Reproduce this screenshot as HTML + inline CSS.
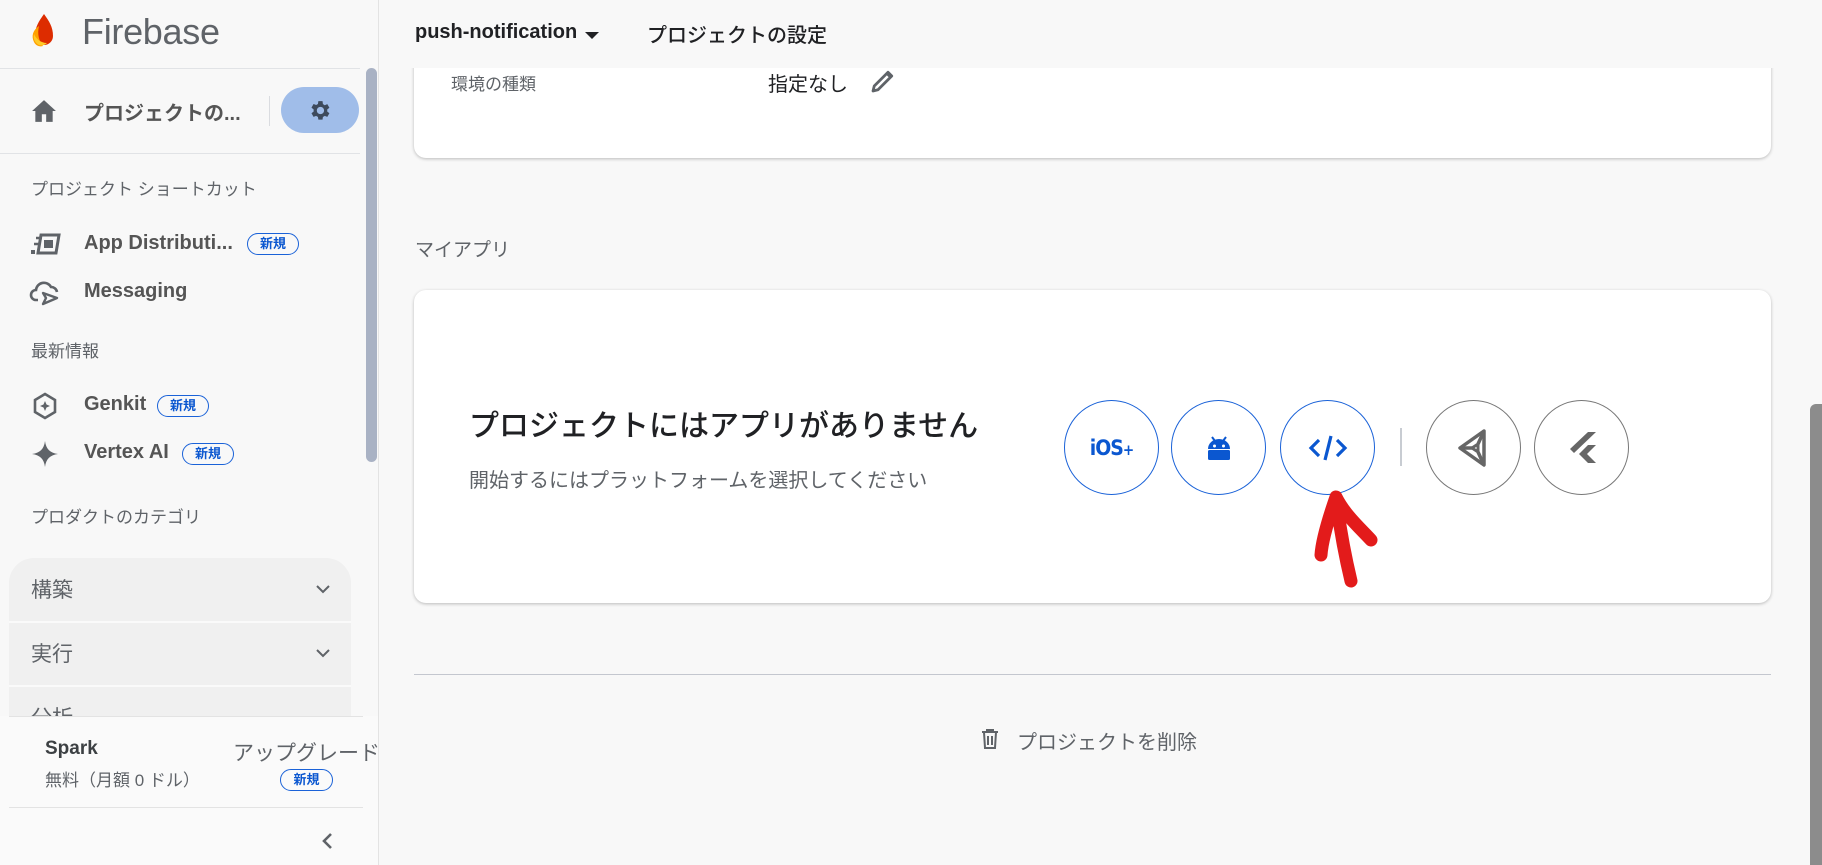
<!DOCTYPE html>
<html><head><meta charset="utf-8">
<style>
*{box-sizing:border-box;margin:0;padding:0}
body{width:1822px;height:865px;overflow:hidden;background:#f8f8f8;font-family:"Liberation Sans","Noto Sans CJK JP",sans-serif;position:relative;color:#202124}
.a{position:absolute;white-space:nowrap}
.side{position:absolute;left:0;top:0;width:379px;height:865px;background:#f8f8f8;border-right:1px solid #e3e3e3}
.lbl{font-size:17px;color:#5f6368}
.it{font-size:20px;color:#555;font-weight:700}
.badge{position:absolute;height:22px;border:1.5px solid #1a62d8;border-radius:11px;color:#0b57d0;font-size:13px;font-weight:700;text-align:center;line-height:19px}
.card{position:absolute;left:414px;width:1357px;background:#fff;border-radius:12px;box-shadow:0 1px 3px rgba(0,0,0,.25)}
.circ{position:absolute;width:95px;height:95px;border-radius:50%;border:1.3px solid #1a62d8;top:400px;display:flex;align-items:center;justify-content:center}
.circ.g{border-color:#777}
.chev{position:absolute;left:316px;width:14px;height:14px}
</style></head><body>

<div class="card" style="top:-20px;height:178px"></div>
<div style="position:absolute;left:379px;top:0;width:1430px;height:68px;background:#f8f8f8"></div>
<div class="a" style="left:415px;top:21px;font-size:20px;font-weight:700;color:#202124">push-notification</div>
<svg class="a" style="left:584px;top:31px" width="16" height="9"><path d="M1 1h14l-7 7z" fill="#202124"/></svg>
<div class="a" style="left:647px;top:19px;font-size:20px;font-weight:500;color:#202124">プロジェクトの設定</div>
<div class="a lbl" style="left:451px;top:70px">環境の種類</div>
<div class="a" style="left:768px;top:68px;font-size:20px;color:#202124">指定なし</div>
<svg class="a" style="left:868px;top:66px" width="30" height="30" viewBox="0 0 24 24"><path d="M4 20l1-4L16 5l3 3L8 19z" fill="none" stroke="#5f6368" stroke-width="2.2" stroke-linejoin="round"/><path d="M15 6l3 3" stroke="#5f6368" stroke-width="2"/></svg>

<div class="a" style="left:415px;top:235px;font-size:19px;color:#5f6368">マイアプリ</div>

<div class="card" style="top:290px;height:313px"></div>
<div class="a" style="left:469px;top:401px;font-size:30px;font-weight:500;color:#202124">プロジェクトにはアプリがありません</div>
<div class="a" style="left:469px;top:464px;font-size:20px;color:#5f6368">開始するにはプラットフォームを選択してください</div>

<div class="circ" style="left:1064px"><span style="font-family:'DejaVu Sans Condensed','Liberation Sans',sans-serif;font-weight:700;color:#0b57d0;font-size:21px;letter-spacing:-1px">iOS<span style="font-size:15px">+</span></span></div>
<div class="circ" style="left:1171px"><svg width="28" height="26" viewBox="0 0 28 26"><path d="M7 2l3 4M21 2l-3 4" stroke="#0b57d0" stroke-width="2"/><path d="M3 14a11 10 0 0 1 22 0z" fill="#0b57d0"/><rect x="3" y="15" width="22" height="10" rx="1.5" fill="#0b57d0"/><circle cx="9.5" cy="11" r="1.5" fill="#fff"/><circle cx="18.5" cy="11" r="1.5" fill="#fff"/></svg></div>
<div class="circ" style="left:1280px"><svg width="40" height="30" viewBox="0 0 40 30"><path d="M11 7l-8 8 8 8M29 7l8 8-8 8" fill="none" stroke="#0b57d0" stroke-width="3.2"/><path d="M23 3l-6 24" stroke="#0b57d0" stroke-width="3.2"/></svg></div>
<div class="a" style="left:1400px;top:428px;width:2px;height:38px;background:#c8ccd2"></div>
<div class="circ g" style="left:1426px"><svg width="40" height="42" viewBox="0 0 40 42"><path d="M30 4L6 21l24 17z" fill="none" stroke="#666" stroke-width="3.5" stroke-linejoin="round"/><path d="M30 4l-6 13M30 38l-6-13M6 21h12" stroke="#666" stroke-width="3.5"/><path d="M18 21l6-4v8z" fill="none" stroke="#666" stroke-width="3"/></svg></div>
<div class="circ g" style="left:1534px"><svg width="32" height="40" viewBox="0 0 32 40"><path d="M22 4L4 21l4 4L30 4z" fill="#666"/><path d="M13 26l9-9h8l-9 9 9 9h-8z" fill="#666"/></svg></div>

<svg class="a" style="left:0;top:0" width="1822" height="865"><path d="M1336 497C1328 520 1322 540 1321 555M1336 497C1340 530 1346 560 1351 581M1336 497C1345 515 1360 528 1371 540" fill="none" stroke="#e31b1b" stroke-width="13" stroke-linecap="round"/></svg>

<div class="a" style="left:414px;top:674px;width:1357px;height:1px;background:#c4c7cf"></div>
<svg class="a" style="left:980px;top:728px" width="20" height="22" viewBox="0 0 20 22"><path d="M2 4h16M7 4V2h6v2M4 4l1 16h10l1-16M8 8v9M12 8v9" fill="none" stroke="#5f6368" stroke-width="2"/></svg>
<div class="a" style="left:1017px;top:726px;font-size:20px;color:#5f6368">プロジェクトを削除</div>

<div class="a" style="left:1810px;top:404px;width:12px;height:461px;background:#8c8c8c;border-radius:6px 0 0 0"></div>

<div class="side">
<svg class="a" style="left:29px;top:12px" width="30" height="38" viewBox="0 0 30 38"><path d="M15 2C10 9 6 15 6 24a9 9 0 0 0 18 0C24 15 20 9 15 2z" fill="#dd2c00"/><path d="M10 14C4 18 2 24 5 30c2 4 6 5 9 4-4-5-6-12-4-20z" fill="#ffa000"/><path d="M5 22c-1 5 1 9 5 11 3 1 6 0 8-2-6 0-11-4-13-9z" fill="#ffca28"/></svg>
<div class="a" style="left:82px;top:11px;font-size:36px;color:#5f6368;letter-spacing:-0.3px">Firebase</div>
<div class="a" style="left:0;top:68px;width:360px;height:1px;background:#e1e3e6"></div>
<svg class="a" style="left:31px;top:99px" width="26" height="24" viewBox="0 0 24 22"><path d="M12 1L1 11h3v10h6v-7h4v7h6V11h3z" fill="#5f6368"/></svg>
<div class="a it" style="left:84px;top:97px">プロジェクトの...</div>
<div class="a" style="left:269px;top:96px;width:1px;height:30px;background:#dadce0"></div>
<div class="a" style="left:281px;top:87px;width:78px;height:46px;background:#a0bde9;border-radius:23px"></div>
<svg class="a" style="left:307px;top:98px" width="25" height="25" viewBox="0 0 24 24"><path d="M19.4 13a7.5 7.5 0 0 0 0-2l2.1-1.6-2-3.5-2.5 1a7 7 0 0 0-1.7-1L14.9 3h-4l-.4 2.7a7 7 0 0 0-1.700 1l-2.5-1-2 3.5L6.4 11a7.5 7.5 0 0 0 0 2l-2.1 1.6 2 3.5 2.5-1a7 7 0 0 0 1.7 1l.4 2.7h4l.4-2.7a7 7 0 0 0 1.7-1l2.5 1 2-3.5zM12.9 15.5a3.5 3.5 0 1 1 0-7 3.5 3.5 0 0 1 0 7z" fill="#3d4a5c"/></svg>
<div class="a" style="left:0;top:153px;width:360px;height:1px;background:#e1e3e6"></div>

<div class="a lbl" style="left:31px;top:175px">プロジェクト ショートカット</div>
<svg class="a" style="left:29px;top:233px" width="32" height="22" viewBox="0 0 32 22"><rect x="2" y="17" width="4" height="4" fill="#5f6368"/><path d="M7 5h6M5 11h6" stroke="#5f6368" stroke-width="2.5"/><path d="M12 2h18l-3 18H9z" fill="none" stroke="#5f6368" stroke-width="3"/><rect x="15" y="7" width="9" height="8" fill="#5f6368"/></svg>
<div class="a it" style="left:84px;top:232px">App Distributi...</div>
<div class="badge" style="left:247px;top:233px;width:52px">新規</div>
<svg class="a" style="left:29px;top:280px" width="32" height="26" viewBox="0 0 32 26"><path d="M9 20H7a5 5 0 0 1 0-10 8 8 0 0 1 15-3 6 6 0 0 1 6 5" fill="none" stroke="#5f6368" stroke-width="2.6"/><path d="M14 13l14 5-14 6 3-6z" fill="none" stroke="#5f6368" stroke-width="2.4" stroke-linejoin="round"/></svg>
<div class="a it" style="left:84px;top:280px">Messaging</div>

<div class="a lbl" style="left:31px;top:337px">最新情報</div>
<svg class="a" style="left:32px;top:392px" width="26" height="28" viewBox="0 0 26 28"><path d="M13 2l10 6v12l-10 6-10-6V8z" fill="none" stroke="#5f6368" stroke-width="2.6"/><path d="M13 9l1.5 3.5L18 14l-3.5 1.5L13 19l-1.5-3.5L8 14l3.5-1.5z" fill="#5f6368"/></svg>
<div class="a it" style="left:84px;top:393px">Genkit</div>
<div class="badge" style="left:157px;top:395px;width:52px">新規</div>
<svg class="a" style="left:31px;top:440px" width="28" height="28" viewBox="0 0 28 28"><path d="M14 1C15 9 19 13 27 14 19 15 15 19 14 27 13 19 9 15 1 14 9 13 13 9 14 1z" fill="#5f6368"/></svg>
<div class="a it" style="left:84px;top:441px">Vertex AI</div>
<div class="badge" style="left:182px;top:443px;width:52px">新規</div>

<div class="a lbl" style="left:31px;top:503px">プロダクトのカテゴリ</div>

<div class="a" style="left:9px;top:558px;width:342px;height:160px;background:#f0f0f0;border-radius:25px 25px 0 0"></div>
<div class="a" style="left:9px;top:621px;width:342px;height:2px;background:#fafafa"></div>
<div class="a" style="left:9px;top:685px;width:342px;height:2px;background:#fafafa"></div>
<div class="a" style="left:31px;top:574px;font-size:21px;color:#5f6368">構築</div>
<div class="a" style="left:31px;top:638px;font-size:21px;color:#5f6368">実行</div>
<div class="a" style="left:31px;top:702px;font-size:21px;color:#5f6368;height:14px;overflow:hidden">分析</div>
<svg class="chev" style="top:582px" viewBox="0 0 14 14"><path d="M1 4l6 6 6-6" fill="none" stroke="#5f6368" stroke-width="2"/></svg>
<svg class="chev" style="top:646px" viewBox="0 0 14 14"><path d="M1 4l6 6 6-6" fill="none" stroke="#5f6368" stroke-width="2"/></svg>

<div class="a" style="left:0;top:716px;width:378px;height:149px;background:#fafafa"></div>
<div class="a" style="left:9px;top:716px;width:354px;height:1px;background:#e3e3e3"></div>
<div class="a" style="left:45px;top:738px;font-size:19px;color:#3c4043;font-weight:700">Spark</div>
<div class="a" style="left:45px;top:766px;font-size:17px;color:#5f6368">無料（月額 0 ドル）</div>
<div class="a" style="left:233px;top:737px;font-size:21px;color:#5f6368;width:145px;overflow:hidden">アップグレード</div>
<div class="badge" style="left:280px;top:769px;width:53px">新規</div>
<div class="a" style="left:9px;top:807px;width:354px;height:1px;background:#e3e3e3"></div>
<svg class="a" style="left:320px;top:832px" width="14" height="18" viewBox="0 0 14 18"><path d="M11 2L4 9l7 7" fill="none" stroke="#5f6368" stroke-width="2.6"/></svg>

<div class="a" style="left:366px;top:68px;width:11px;height:394px;background:#a9b2c4;border-radius:6px"></div>
</div>
</body></html>
